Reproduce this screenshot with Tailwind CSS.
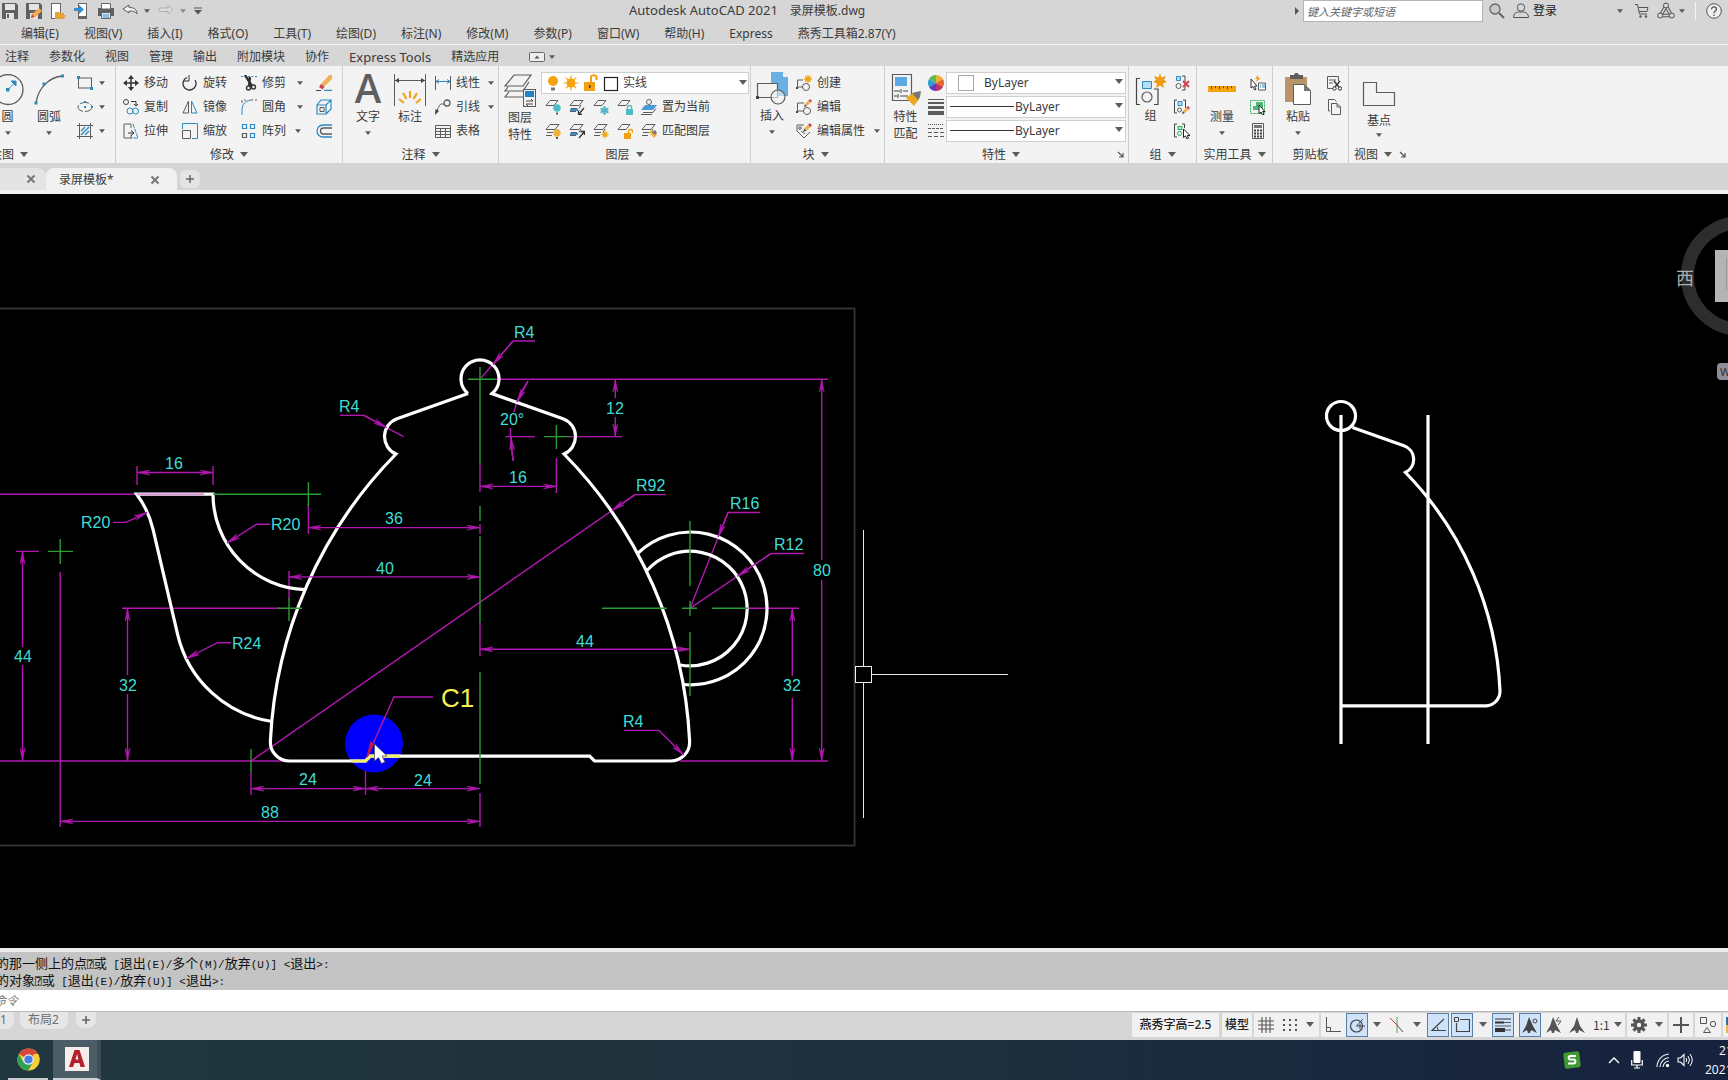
<!DOCTYPE html>
<html lang="zh-CN">
<head>
<meta charset="utf-8">
<title>Autodesk AutoCAD 2021 录屏模板.dwg</title>
<script src="https://cdn.jsdelivr.net/npm/@tailwindcss/browser@4"></script>
</head>
<body class="h-screen overflow-hidden flex flex-col bg-[#d6d6d6] text-[#3b3b3b] text-xs leading-4 whitespace-nowrap font-['Noto_Sans','Noto_Sans_CJK_SC',sans-serif]">

<svg width="0" height="0" class="absolute" aria-hidden="true">
  <defs>
    <symbol id="caret" viewBox="0 0 8 5"><path d="M0 0h8L4 5z" fill="#5c5c5c"/></symbol>
    <symbol id="close" viewBox="0 0 10 10"><path d="M1.5 1.5l7 7M8.5 1.5l-7 7" stroke="#777" stroke-width="2" fill="none"/></symbol>
    <symbol id="launch" viewBox="0 0 7 7"><path d="M1 1l5 5M6 2v4H2" stroke="#555" fill="none" stroke-width="1.2"/></symbol>
    <symbol id="sheets" viewBox="0 0 16 16"><g fill="none" stroke="#5c5c5c"><path d="M5 1.5h9l-4 5H1z"/><path d="M2 9.5h6M1 12.5h6M12 6l-2 3.5"/></g></symbol>
    <symbol id="sheet" viewBox="0 0 16 16"><path d="M5 1.5h8l-4 5H1z" fill="none" stroke="#5c5c5c"/></symbol>
    <symbol id="pencil" viewBox="0 0 9 9"><path d="M1 8l1-3 2 2z" fill="#444"/><path d="M2 5l3.500-3.500 2 2L4 7z" fill="#f2b04c"/><path d="M5.500 1.500L7 0l2 2-1.500 1.500z" fill="#c9424c"/></symbol>
  </defs>
</svg>

<!-- title bar -->
<header class="flex flex-col shrink-0">
  <div class="h-[22px] flex items-center justify-between">
    <div class="flex items-center gap-2 pl-0.5 w-[629px]">
      <button aria-label="保存"><svg class="size-4 block" viewBox="0 0 16 16"><path d="M0 0h14l2 2v14H0z" fill="#606060"/><path d="M3 1h10v6H3zM4 10h8v6H4z" fill="#e4e4e4"/><path d="M5 11h2v4H5z" fill="#606060"/></svg></button>
      <button aria-label="另存为"><svg class="size-4 block" viewBox="0 0 16 16"><path d="M0 0h14l2 2v14H0z" fill="#606060"/><path d="M3 1h10v6H3zM4 10h8v6H4z" fill="#e4e4e4"/><path d="M5 15l1-4 7-6 3 3-7 6z" fill="#f3a94e"/><path d="M5 15l1-4 2.500 3z" fill="#c44"/></svg></button>
      <button aria-label="从移动设备打开"><svg class="size-4 block" viewBox="0 0 16 16"><rect x="1.500" y=".5" width="9" height="15" fill="#fff" stroke="#666"/><path d="M5 9h4l1 1h4v2h2l-2 4H5z" fill="#e5a33a"/></svg></button>
      <button aria-label="保存到移动设备"><svg class="size-4 block" viewBox="0 0 16 16"><rect x="4.500" y=".5" width="8" height="15" fill="#fff" stroke="#666"/><path d="M4 13h9v3H4z" fill="#666"/><path d="M0 5h5V2l5 4.500-5 4.500V8H0z" fill="#2f8fd0"/></svg></button>
      <button aria-label="打印"><svg class="size-4 block" viewBox="0 0 16 16"><path d="M0 5h16v8H0z" fill="#606060"/><path d="M3.500.5h9V6h-9z" fill="#fff" stroke="#666"/><path d="M3.500 9.500h9v6h-9z" fill="#cfe3f3" stroke="#666"/><path d="M5 12h6M5 14h6" stroke="#4a9ad0"/></svg></button>
      <button aria-label="放弃" class="flex items-center gap-1.5"><svg class="w-4 h-4 block" viewBox="0 0 16 16"><path d="M1 6l6-4v2.500c5 0 8 2 8 6.500-2-2.500-4-3-8-3V10z" fill="#f4f4f4" stroke="#555"/></svg><svg class="w-1.5 h-1"><use href="#caret"/></svg></button>
      <button aria-label="重做" class="flex items-center gap-1.5"><svg class="w-4 h-4 block" viewBox="0 0 16 16"><path d="M15 6.500l-5-4v2.500H1v3.500h9V11z" fill="#dcdcdc" stroke="#b0b0b0"/></svg><svg class="w-1.5 h-1 opacity-60"><use href="#caret"/></svg></button>
      <button aria-label="自定义快速访问工具栏"><svg class="w-2 h-2 block" viewBox="0 0 8 8"><path d="M0 1h8" stroke="#555"/><path d="M0 3h8L4 7.500z" fill="#555"/></svg></button>
    </div>
    <h1 class="text-xs font-normal flex items-center gap-3"><span class="text-[13px]">Autodesk AutoCAD 2021</span><span>录屏模板.dwg</span></h1>
    <div class="flex-1"></div>
    <div class="flex items-center w-[434px] h-full">
      <svg class="w-1.5 h-2 shrink-0" viewBox="0 0 6 8"><path d="M1 0v8l4-4z" fill="#555"/></svg>
      <input aria-label="搜索" placeholder="键入关键字或短语" class="ml-[3px] w-[180px] shrink-0 h-[22px] bg-white border border-[#b5b5b5] px-[3px] text-[11px] italic text-[#555] placeholder:text-[#666]">
      <button aria-label="搜索" class="ml-1.5 shrink-0"><svg class="size-4 block" viewBox="0 0 16 16"><circle cx="6" cy="6" r="5" fill="#c9c9c9" stroke="#666" stroke-width="1.300"/><path d="M10 10l5 5" stroke="#666" stroke-width="2"/></svg></button>
      <button class="ml-2 shrink-0 flex items-center gap-1 text-[#222]"><svg class="size-4 block" viewBox="0 0 16 16"><circle cx="8" cy="4.500" r="3.700" fill="none" stroke="#555"/><path d="M.5 14.500c0-4 3-5.500 5-5.500h5c2 0 5 1.500 5 5.500z" fill="none" stroke="#555"/></svg>登录</button>
      <svg class="ml-[60px] w-1.5 h-1 shrink-0"><use href="#caret"/></svg>
      <button aria-label="购物车" class="ml-3 shrink-0"><svg class="w-3.5 h-4 block" viewBox="0 0 14 16"><path d="M0 1.500h2.500l2 9.500H12M3.500 4.500H13l-1 4H4" fill="none" stroke="#555"/><circle cx="5.500" cy="13.500" r="1.200" fill="#555"/><circle cx="11" cy="13.500" r="1.200" fill="#555"/></svg></button>
      <button aria-label="Autodesk App Store" class="ml-2 shrink-0 flex items-center gap-1"><svg class="size-[18px] block" viewBox="0 0 18 18"><g fill="none" stroke="#555"><path d="M9 4L3.500 13.500h11z" stroke-width="3.500"/><path d="M9 4L3.500 13.500h11z" stroke="#d6d6d6" stroke-width="1.500"/><circle cx="9" cy="3.500" r="2.500" fill="#d6d6d6"/><circle cx="3.200" cy="13.500" r="2.500" fill="#d6d6d6"/><circle cx="14.800" cy="13.500" r="2.500" fill="#d6d6d6"/></g></svg><svg class="w-1.5 h-1"><use href="#caret"/></svg></button>
      <span class="ml-2.5 w-px h-[18px] shrink-0 bg-[#f4f4f4]"></span>
      <button aria-label="帮助" class="ml-2.5 shrink-0 flex items-center gap-2"><svg class="size-4 block" viewBox="0 0 16 16"><circle cx="8" cy="8" r="7.300" fill="#eee" stroke="#555"/><path d="M5.500 6.200c0-3.200 5-3.200 5 0 0 1.800-2.500 1.800-2.500 4M8 11.500v1.500" fill="none" stroke="#555" stroke-width="1.300"/></svg><svg class="w-1.5 h-1 shrink-0"><use href="#caret"/></svg></button>
    </div>
  </div>
  <nav aria-label="菜单栏" class="h-[23px] flex items-center gap-[25px] pl-[21px] pt-0.5 border-b border-[#f2f2f2]">
    <a href="#">编辑(E)</a><a href="#">视图(V)</a><a href="#">插入(I)</a><a href="#">格式(O)</a><a href="#">工具(T)</a><a href="#">绘图(D)</a><a href="#">标注(N)</a><a href="#">修改(M)</a><a href="#">参数(P)</a><a href="#">窗口(W)</a><a href="#">帮助(H)</a><a href="#">Express</a><a href="#">燕秀工具箱2.87(Y)</a>
  </nav>
  <nav aria-label="功能区选项卡" class="h-[21px] flex items-center gap-5 pl-[5px] pt-0.5">
    <a href="#">注释</a><a href="#">参数化</a><a href="#">视图</a><a href="#">管理</a><a href="#">输出</a><a href="#">附加模块</a><a href="#">协作</a><a href="#" class="text-[13px]">Express Tools</a><a href="#">精选应用</a>
    <button aria-label="最小化" class="ml-2.5 flex items-center gap-1"><svg class="w-4 h-2.5" viewBox="0 0 16 10"><rect x=".5" y=".5" width="15" height="9" rx="1" fill="#eee" stroke="#666"/><path d="M5.500 6.500h5L8 3.500z" fill="#555"/></svg><svg class="w-1.5 h-1"><use href="#caret"/></svg></button>
  </nav>
</header>

<!-- ribbon -->
<section aria-label="功能区" class="h-[97px] shrink-0 flex bg-[#f3f3f3] overflow-hidden">
  <!-- draw -->
  <div class="w-[116px] shrink-0 border-r border-[#cfcfcf] flex flex-col pt-[5px]">
    <div class="flex h-[72px]">
      <button class="w-[31px] flex flex-col items-center pr-4 pt-[3px]"><svg class="w-[34px] h-[34px] shrink-0" viewBox="0 0 34 34"><circle cx="17" cy="15.500" r="15" fill="none" stroke="#5c5c5c" stroke-width="1.300"/><path d="M17 15.500l8-8M25 12V7h-5z" stroke="#2b8bc0" fill="#2b8bc0"/><rect x="15" y="14" width="3.500" height="3.500" fill="#2b8bc0"/></svg><span class="pt-px">圆</span><svg class="w-1.5 h-1 mt-1.5 shrink-0"><use href="#caret"/></svg></button>
      <button class="w-[36px] flex flex-col items-center pt-[3px]"><svg class="w-[34px] h-[34px] shrink-0" viewBox="0 0 34 34"><path d="M4 29C6 15 16 3 31 2" fill="none" stroke="#5c5c5c" stroke-width="1.300"/><path d="M2.500 27.500h3v3h-3zM10.500 8.500h3v3h-3zM29 .5h3v3h-3z" fill="#2b8bc0"/></svg><span class="pt-px">圆弧</span><svg class="w-1.5 h-1 mt-1.5 shrink-0"><use href="#caret"/></svg></button>
      <div class="ml-2.5 flex flex-col">
        <button aria-label="矩形" class="h-6 flex items-center gap-1.5"><svg class="size-4" viewBox="0 0 16 16"><rect x="1.500" y="3" width="13" height="10" fill="none" stroke="#5c5c5c"/><path d="M0 1h3v3H0zM13 12h3v3h-3z" fill="#2b8bc0"/></svg><svg class="w-1.5 h-1"><use href="#caret"/></svg></button>
        <button aria-label="椭圆" class="h-6 flex items-center gap-1.5"><svg class="size-4" viewBox="0 0 16 16"><ellipse cx="8" cy="8" rx="7" ry="4.500" fill="none" stroke="#5c5c5c" stroke-dasharray="9 2"/><path d="M7 7h2v2H7zM14 7h2v2h-2zM7 2h2v2H7z" fill="#2b8bc0"/></svg><svg class="w-1.5 h-1"><use href="#caret"/></svg></button>
        <button aria-label="图案填充" class="h-6 flex items-center gap-1.5"><svg class="size-4" viewBox="0 0 16 16"><path d="M0 2.500h16M0 13.500h16M2.500 0v16M13.500 0v16" stroke="#5c5c5c"/><path d="M4 8l4-4M4 12l8-8M8 12l4-4" stroke="#2b8bc0" stroke-width="1.400"/></svg><svg class="w-1.5 h-1"><use href="#caret"/></svg></button>
      </div>
    </div>
    <button class="flex items-center gap-1.5 -ml-2.5 h-5 pt-[3px]">绘图<svg class="w-2 h-[5px]"><use href="#caret"/></svg></button>
  </div>

  <!-- modify -->
  <div class="w-[227px] shrink-0 border-r border-[#cfcfcf] flex flex-col pt-[5px]">
    <div class="grid grid-cols-[59px_59px_75px_16px] grid-rows-[24px_24px_24px] pl-[7px]">
      <button class="flex items-center gap-[5px]"><svg class="size-4" viewBox="0 0 16 16"><path d="M8 1v14M1 8h14" stroke="#333" stroke-width="1.500"/><path d="M8 0l3 4H5zM8 16l3-4H5zM0 8l4-3v6zM16 8l-4-3v6z" fill="#333"/></svg>移动</button>
      <button class="flex items-center gap-[5px]"><svg class="size-4" viewBox="0 0 16 16"><path d="M5 2.500A6.500 6.500 0 1 0 13 5" fill="none" stroke="#333" stroke-width="1.300"/><path d="M7 0v6H2" fill="none" stroke="#333"/></svg>旋转</button>
      <button class="flex items-center gap-[5px]"><svg class="size-4" viewBox="0 0 16 16"><path d="M0 1.500h16" stroke="#2b8bc0" stroke-dasharray="2 1.500"/><path d="M4 0l7 11M9 2L8 11" stroke="#333" stroke-width="2.400"/><circle cx="7.500" cy="13" r="2" fill="none" stroke="#333" stroke-width="1.400"/><circle cx="12.500" cy="12" r="2" fill="none" stroke="#333" stroke-width="1.400"/></svg>修剪<svg class="w-1.5 h-1 ml-1.5"><use href="#caret"/></svg></button>
      <button aria-label="删除" class="flex items-center"><svg class="size-4" viewBox="0 0 16 16"><path d="M5 9l8-9h3v4l-8 8z" fill="#f3b25a"/><path d="M5 9l3.500 3-2 2.500-3.500-2.500z" fill="#c9424c"/><path d="M0 15.500h5" stroke="#444"/><path d="M8 15.500h8" stroke="#2b8bc0" stroke-width="1.500"/></svg></button>
      <button class="flex items-center gap-[5px]"><svg class="size-4" viewBox="0 0 16 16"><circle cx="3" cy="3" r="2.500" fill="none" stroke="#444"/><path d="M8 2.500h5V7M11 5l2 2 2-2" fill="none" stroke="#333"/><circle cx="7" cy="12" r="3" fill="none" stroke="#2b8bc0"/><circle cx="12.500" cy="12" r="3" fill="none" stroke="#2b8bc0"/></svg>复制</button>
      <button class="flex items-center gap-[5px]"><svg class="size-4" viewBox="0 0 16 16"><path d="M6.500 2v12H1z" fill="none" stroke="#5c5c5c"/><path d="M9.500 2v12H15z" fill="none" stroke="#2b8bc0"/></svg>镜像</button>
      <button class="flex items-center gap-[5px]"><svg class="size-4" viewBox="0 0 16 16"><path d="M1 16v-5C1 5 5 1.500 9 1.500" fill="none" stroke="#2b8bc0"/><path d="M1 4V1h4M9 1h7" fill="none" stroke="#5c5c5c" stroke-dasharray="3 2"/></svg>圆角<svg class="w-1.5 h-1 ml-1.5"><use href="#caret"/></svg></button>
      <button aria-label="分解" class="flex items-center"><svg class="size-4" viewBox="0 0 16 16"><path d="M1 6h9v9H1zM1 6l4-5h10l-5 5M15 1v9l-5 5" fill="none" stroke="#2b8bc0" stroke-width="1.200"/><path d="M4 8.500h4v4H4z" fill="none" stroke="#555"/></svg></button>
      <button class="flex items-center gap-[5px]"><svg class="size-4" viewBox="0 0 16 16"><path d="M1 15V1h7v4M1 15h7v-3" fill="none" stroke="#5c5c5c"/><path d="M10 1l5 14H8" fill="none" stroke="#2b8bc0" stroke-dasharray="4 1"/><path d="M5 10h5M8 7.500l3 2.500-3 2.500" stroke="#333" fill="none"/></svg>拉伸</button>
      <button class="flex items-center gap-[5px]"><svg class="size-4" viewBox="0 0 16 16"><path d="M.5 6V.5h15v15H10" fill="none" stroke="#2b8bc0"/><path d="M.5 7.500h8v8h-8z" fill="none" stroke="#5c5c5c"/></svg>缩放</button>
      <button class="flex items-center gap-[5px]"><svg class="size-4" viewBox="0 0 16 16"><g fill="none" stroke-width="1.200"><path d="M1.500 1.500h4v4h-4zM9.500 1.500h4v4h-4z" stroke="#2b8bc0"/><path d="M9.500 10.500h4v4h-4z" stroke="#2b8bc0"/><path d="M1.500 10.500h4v4h-4z" stroke="#5c5c5c"/></g></svg>阵列<svg class="w-1.5 h-1 ml-1"><use href="#caret"/></svg></button>
      <button aria-label="偏移" class="flex items-center"><svg class="size-4" viewBox="0 0 16 16"><path d="M16 2H7a6 6 0 0 0 0 12h9" fill="none" stroke="#2b8bc0" stroke-width="1.300"/><path d="M16 5H7.500a3 3 0 0 0 0 6H16" fill="none" stroke="#5c5c5c" stroke-width="1.300"/></svg></button>
    </div>
    <button class="flex items-center justify-center gap-1.5 h-5 pt-[3px]">修改<svg class="w-2 h-[5px]"><use href="#caret"/></svg></button>
  </div>

  <!-- annotation -->
  <div class="w-[156px] shrink-0 border-r border-[#cfcfcf] flex flex-col pt-[5px]">
    <div class="flex h-[72px]">
      <button class="w-[50px] flex flex-col items-center pt-[3px]"><svg class="w-[34px] h-[34px] shrink-0" viewBox="0 0 34 34"><text x="17" y="29" text-anchor="middle" font-family="Open Sans" font-weight="600" font-size="40" fill="#5f5f5f">A</text></svg><span class="pt-px">文字</span><svg class="w-1.5 h-1 mt-1.5 shrink-0"><use href="#caret"/></svg></button>
      <button class="w-[34px] flex flex-col items-center pt-[3px]"><svg class="w-[34px] h-[34px] shrink-0" viewBox="0 0 34 34"><path d="M1.500 0v32M32.500 0v32M2 6.500h30" stroke="#5c5c5c"/><path d="M2 6.500l4-2.500v5zM32 6.500L28 4v5z" fill="#444"/><path d="M17 17v7M10 19l3.500 6M24 19l-3.500 6M6 25l5 4M28 25l-5 4" stroke="#eea41c" stroke-width="2.200"/></svg><span class="pt-px">标注</span></button>
      <div class="ml-2 flex flex-col">
        <button class="h-6 flex items-center gap-[5px]"><svg class="size-4" viewBox="0 0 16 16"><path d="M.5 1v14M15.500 1v14" stroke="#5c5c5c"/><path d="M1 6.500h14M4 4.500l-3 2 3 2M12 4.500l3 2-3 2" stroke="#2b8bc0" fill="none"/></svg>线性<svg class="w-1.5 h-1 ml-[3px]"><use href="#caret"/></svg></button>
        <button class="h-6 flex items-center gap-[5px]"><svg class="size-4" viewBox="0 0 16 16"><circle cx="12" cy="4" r="3" fill="none" stroke="#5c5c5c" stroke-width="1.300"/><path d="M9 5H6C4 6 3 10 1 14" fill="none" stroke="#5c5c5c"/><path d="M0 16l.5-6L4 12z" fill="#444"/></svg>引线<svg class="w-1.5 h-1 ml-[3px]"><use href="#caret"/></svg></button>
        <button class="h-6 flex items-center gap-[5px]"><svg class="size-4" viewBox="0 0 16 16"><path d="M.5 2.500h15v12H.5zM.5 5.500h15M.5 8.500h15M.5 11.500h15M5.500 5v9M10.500 5v9" fill="none" stroke="#5c5c5c"/></svg>表格</button>
      </div>
    </div>
    <button class="flex items-center justify-center gap-1.5 h-5 pt-[3px]">注释<svg class="w-2 h-[5px]"><use href="#caret"/></svg></button>
  </div>

  <!-- layers -->
  <div class="w-[252px] shrink-0 border-r border-[#cfcfcf] flex flex-col pt-[5px]">
    <div class="flex h-[72px]">
      <button class="w-[42px] flex flex-col items-center pt-[3px]"><svg class="w-8 h-[34px] shrink-0" viewBox="0 0 32 34"><g fill="none" stroke="#5c5c5c" stroke-width="1.200"><path d="M10 1h17l-8 11H1z"/><path d="M25 8l-6 9H1l3-4M19 23H1l4-5"/></g><rect x="19.500" y="15.500" width="12" height="17" fill="#f3f3f3" stroke="#5c5c5c"/><path d="M21 17h9v6h-9z" fill="#2280c4"/><path d="M22 27h7l-2-2M29 30h-7l2 2" fill="none" stroke="#444"/></svg><span class="pt-px leading-[17px]">图层<br>特性</span></button>
      <div class="flex flex-col w-[208px]">
        <div class="relative h-[22px] my-px flex items-center">
          <select aria-label="图层" class="appearance-none w-full h-full bg-white border border-[#cfcfcf] pl-[81px] outline-none"><option>实线</option></select>
          <svg class="absolute left-1.5 top-0.5 w-[72px] h-[18px] pointer-events-none" viewBox="0 0 72 18"><circle cx="6" cy="7" r="5" fill="#f5a30e"/><path d="M4 13.500h4v3H4z" fill="#777"/><circle cx="24" cy="9" r="4.500" fill="#f5a30e"/><path d="M24 1.500v15M16.500 9h15M18.700 3.700l10.600 10.600M29.300 3.700L18.700 14.300" stroke="#f5a30e" stroke-width="1.200"/><path d="M37 8h11v9H37z" fill="#f0a010"/><path d="M44 8V3.500c0-3 5.500-3 5.500 0V6" fill="none" stroke="#f0a010" stroke-width="2"/><path d="M42 11h1.500v3H42z" fill="#444"/><rect x="57.500" y="3.500" width="13" height="13" fill="#fff" stroke="#222" stroke-width="1.200"/></svg>
          <svg class="absolute right-0.5 top-2 w-2 h-[5px] pointer-events-none"><use href="#caret"/></svg>
        </div>
        <div class="h-6 flex items-center gap-2 pl-1">
          <button aria-label="关"><svg class="size-4 block" viewBox="0 0 16 16"><use href="#sheet"/><circle cx="12" cy="9" r="3.700" fill="#4cbdc4"/><path d="M11 13.500h2v2h-2z" fill="#555"/></svg></button>
          <button aria-label="隔离"><svg class="size-4 block" viewBox="0 0 16 16"><use href="#sheets"/><path d="M1 11h8" stroke="#3b8ec8" stroke-width="2"/><path d="M15 9l-5 6M9.500 11.500V15.500H13" stroke="#333" fill="none" stroke-width="1.300"/></svg></button>
          <button aria-label="冻结"><svg class="size-4 block" viewBox="0 0 16 16"><use href="#sheet"/><path d="M11.500 7v9M7.500 9.500l8 4M15.500 9.500l-8 4" stroke="#4cb3c4" stroke-width="1.500"/><circle cx="11.500" cy="11.500" r="3" fill="none" stroke="#4cb3c4"/></svg></button>
          <button aria-label="锁定"><svg class="size-4 block" viewBox="0 0 16 16"><use href="#sheet"/><path d="M9 10h7v6H9z" fill="#4cbdc4"/><path d="M10.500 10V8c0-2 4-2 4 0v2" fill="none" stroke="#4cbdc4" stroke-width="1.300"/></svg></button>
          <button class="flex items-center gap-[5px]"><svg class="size-4" viewBox="0 0 16 16"><path d="M4 6h12l-4 5H0z" fill="#4a9ad6"/><circle cx="8" cy="3" r="2.500" fill="#f3f3f3" stroke="#666"/><path d="M2 13.500h10l3-4M0 15.500h11" fill="none" stroke="#5c5c5c"/></svg>置为当前</button>
        </div>
        <div class="h-6 flex items-center gap-2 pl-1">
          <button aria-label="打开所有图层"><svg class="size-4 block" viewBox="0 0 16 16"><use href="#sheets"/><circle cx="12" cy="10" r="3.700" fill="#f0b23c"/><path d="M11 14h2v2h-2z" fill="#555"/></svg></button>
          <button aria-label="取消隔离"><svg class="size-4 block" viewBox="0 0 16 16"><use href="#sheets"/><path d="M1 11h8" stroke="#3b8ec8" stroke-width="2"/><path d="M10 15l5-6M11.500 8.500H15.500V12" stroke="#333" fill="none" stroke-width="1.300"/></svg></button>
          <button aria-label="解冻所有图层"><svg class="size-4 block" viewBox="0 0 16 16"><use href="#sheets"/><circle cx="12" cy="11.500" r="2.500" fill="#f0a818"/><path d="M12 7v9M7.500 11.500h9M9 8.500l6 6M15 8.500l-6 6" stroke="#f0a818" stroke-width=".8"/></svg></button>
          <button aria-label="解锁"><svg class="size-4 block" viewBox="0 0 16 16"><use href="#sheet"/><path d="M7 10h7v6H7z" fill="#f0a010"/><path d="M11.500 10V8c0-2 4-2 4 0v2" fill="none" stroke="#f0a010" stroke-width="1.300"/></svg></button>
          <button class="flex items-center gap-[5px]"><svg class="size-4" viewBox="0 0 16 16"><use href="#sheets"/><path d="M8 9l3-2 5 5-3 3z" fill="#f0b23c"/><path d="M11 9l3-2 2 3-2 2z" fill="#777"/></svg>匹配图层</button>
        </div>
      </div>
    </div>
    <button class="flex items-center justify-center gap-1.5 h-5 pt-[3px]">图层<svg class="w-2 h-[5px]"><use href="#caret"/></svg></button>
  </div>

  <!-- block -->
  <div class="w-[134px] shrink-0 border-r border-[#cfcfcf] flex flex-col pt-[5px]">
    <div class="flex h-[72px]">
      <button class="w-[42px] flex flex-col items-center pt-px"><svg class="w-8 h-[34px] shrink-0" viewBox="0 0 32 34"><path d="M15 0h12l5 5v19H15z" fill="#68b0e2"/><path d="M27 0v5h5" fill="#f3f3f3"/><path d="M1.500 11.500h20v14h-20z" fill="#f3f3f3" stroke="#5c5c5c" stroke-width="1.200"/><circle cx="22" cy="25" r="7" fill="#f3f3f3" fill-opacity=".6" stroke="#5c5c5c" stroke-width="1.200"/><path d="M0 24h3v3H0z" fill="#444"/></svg><span class="pt-0.5">插入</span><svg class="w-1.5 h-1 mt-1.5 shrink-0"><use href="#caret"/></svg></button>
      <div class="ml-[3px] flex flex-col">
        <button class="h-6 flex items-center gap-[5px]"><svg class="size-4" viewBox="0 0 16 16"><path d="M7 5H1.500v7H7" fill="none" stroke="#5c5c5c"/><circle cx="10" cy="12" r="3.500" fill="none" stroke="#5c5c5c"/><path d="M0 12h2v2H0z" fill="#444"/><path d="M12 0v8M8 4h8M9.200 1.200l5.600 5.600M14.800 1.200L9.200 6.800" stroke="#eea41c" stroke-width="1.400"/></svg>创建</button>
        <button class="h-6 flex items-center gap-[5px]"><svg class="size-4" viewBox="0 0 16 16"><path d="M8 4H1.500v8H7" fill="none" stroke="#5c5c5c"/><circle cx="11" cy="12" r="3.500" fill="none" stroke="#5c5c5c"/><path d="M0 12h2v2H0z" fill="#444"/><use href="#pencil" x="7" y="0" width="9" height="9"/></svg>编辑</button>
        <button class="h-6 flex items-center gap-[5px]"><svg class="size-4" viewBox="0 0 16 16"><path d="M8 2H1v6l7 7 6-6" fill="none" stroke="#5c5c5c"/><circle cx="4" cy="5" r="1.300" fill="none" stroke="#5c5c5c"/><path d="M5 8l4 3" stroke="#5c5c5c"/><use href="#pencil" x="6" y="0" width="10" height="10"/></svg>编辑属性<svg class="w-1.5 h-1 ml-1"><use href="#caret"/></svg></button>
      </div>
    </div>
    <button class="flex items-center justify-center gap-1.5 h-5 pt-[3px] pr-1">块<svg class="w-2 h-[5px]"><use href="#caret"/></svg></button>
  </div>

  <!-- properties -->
  <div class="w-[244px] shrink-0 border-r border-[#cfcfcf] flex flex-col pt-[5px]">
    <div class="flex h-[72px]">
      <button class="w-[41px] flex flex-col items-center pt-0.5"><svg class="w-8 h-[34px] shrink-0" viewBox="0 0 32 34"><path d="M2.500 1.500h19v26h-19z" fill="#f3f3f3" stroke="#5c5c5c" stroke-width="1.200"/><path d="M5 4h12v9H5z" fill="#5aa9e0"/><path d="M4 18h6M13 18h5M11 16v4M4 23h3M10 23h8M8 21v4" stroke="#444"/><path d="M16 25l7-5 6 6-5 7z" fill="#eea820"/><path d="M22 20l4-1 5-1-1 6-2 3z" fill="#777"/></svg><span class="pt-px leading-[17px]">特性<br>匹配</span></button>
      <div class="flex flex-col items-center w-5">
        <div class="h-6 flex items-center"><svg class="size-4" viewBox="-8 -8 16 16"><path d="M0 0V-8A8 8 0 0 1 6.900-4z" fill="#e8b52c"/><path d="M0 0L6.900-4A8 8 0 0 1 6.900 4z" fill="#e6682e"/><path d="M0 0L6.900 4A8 8 0 0 1 0 8z" fill="#c0306a"/><path d="M0 0V8A8 8 0 0 1-6.900 4z" fill="#5440c4"/><path d="M0 0L-6.900 4A8 8 0 0 1-6.900-4z" fill="#2c9fd0"/><path d="M0 0L-6.900-4A8 8 0 0 1 0-8z" fill="#5bb85a"/></svg></div>
        <div class="h-6 flex items-center"><svg class="size-4" viewBox="0 0 16 16"><path d="M0 .5h16" stroke="#5c5c5c"/><path d="M0 4h16" stroke="#5c5c5c" stroke-width="2"/><path d="M0 8.500h16" stroke="#5c5c5c" stroke-width="3"/><path d="M0 14h16" stroke="#5c5c5c" stroke-width="4"/></svg></div>
        <div class="h-6 flex items-center"><svg class="size-4" viewBox="0 0 16 16"><path d="M0 1.500h16" stroke="#5c5c5c" stroke-dasharray="1 1"/><path d="M0 5.500h16" stroke="#5c5c5c" stroke-dasharray="3 1"/><path d="M0 9.500h16M0 13.500h16" stroke="#5c5c5c" stroke-dasharray="4 2"/></svg></div>
      </div>
      <div class="flex flex-col w-[180px]">
        <div class="relative h-6 flex items-center"><select aria-label="颜色" class="appearance-none w-full h-[22px] bg-white border border-[#cfcfcf] pl-[37px] outline-none"><option>ByLayer</option></select><span class="absolute left-3 top-1 size-4 border border-[#aaa] bg-white pointer-events-none"></span><svg class="absolute right-[3px] top-2 w-2 h-[5px] pointer-events-none"><use href="#caret"/></svg></div>
        <div class="relative h-6 flex items-center"><select aria-label="线宽" class="appearance-none w-full h-[22px] bg-white border border-[#cfcfcf] pl-[68px] outline-none"><option>ByLayer</option></select><span class="absolute left-1 top-[11px] w-16 h-px bg-[#333] pointer-events-none"></span><svg class="absolute right-[3px] top-2 w-2 h-[5px] pointer-events-none"><use href="#caret"/></svg></div>
        <div class="relative h-6 flex items-center"><select aria-label="线型" class="appearance-none w-full h-[22px] bg-white border border-[#cfcfcf] pl-[68px] outline-none"><option>ByLayer</option></select><span class="absolute left-1 top-[11px] w-16 h-px bg-[#333] pointer-events-none"></span><svg class="absolute right-[3px] top-2 w-2 h-[5px] pointer-events-none"><use href="#caret"/></svg></div>
      </div>
    </div>
    <div class="flex items-center h-5 pt-[3px] pl-[97px] pr-1 justify-between"><button class="flex items-center gap-1.5">特性<svg class="w-2 h-[5px]"><use href="#caret"/></svg></button><button aria-label="特性对话框"><svg class="size-[7px]"><use href="#launch"/></svg></button></div>
  </div>

  <!-- group -->
  <div class="w-[68px] shrink-0 border-r border-[#cfcfcf] flex flex-col pt-[5px]">
    <div class="flex h-[72px]">
      <button class="w-[43px] flex flex-col items-center pt-0.5"><svg class="w-8 h-[34px] shrink-0" viewBox="0 0 32 34"><path d="M5 5.500H1.500v26H5M19 16h4v15.500h-4" fill="none" stroke="#444" stroke-width="1.200"/><path d="M7.500 8.500h9v7h-9z" fill="#b8dcf4" stroke="#2b8bc0"/><circle cx="12" cy="24" r="5" fill="none" stroke="#5c5c5c" stroke-width="1.200"/><path d="M25 0l1.500 4.500L31 3l-2 4 3 2-4 1.500 1 4.500-4-2.500-4 2.500 1-4.500L18 9l3-2-2-4 4.500 1.500z" fill="#f09c14"/></svg><span class="pt-px">组</span></button>
      <div class="ml-0.5 flex flex-col">
        <button aria-label="解除编组" class="h-6"><svg class="size-4" viewBox="0 0 16 16"><path d="M2.500 1.500h4v4h-4z" fill="#b8dcf4" stroke="#2b8bc0"/><circle cx="4.500" cy="11" r="2.500" fill="none" stroke="#5c5c5c"/><path d="M8 1h3v14H8" fill="none" stroke="#444"/><path d="M9 6l6 6M15 6l-6 6" stroke="#cf4452" stroke-width="2"/></svg></button>
        <button aria-label="组编辑" class="h-6"><svg class="size-4" viewBox="0 0 16 16"><path d="M3 1H.5v13H3M9 1h2.500v8" fill="none" stroke="#444"/><path d="M4 2.500h4v4H4z" fill="#b8dcf4" stroke="#2b8bc0"/><circle cx="5.500" cy="11" r="2" fill="none" stroke="#5c5c5c"/><use href="#pencil" x="7" y="7" width="9" height="9"/></svg></button>
        <button aria-label="启用组选择" class="h-6"><svg class="size-4" viewBox="0 0 16 16"><path d="M3 1H.5v13H3M8 1h2.500v4" fill="none" stroke="#444"/><path d="M4 3.500h4v3H4z" fill="#c8ecd0" stroke="#2ca858"/><circle cx="5.500" cy="10.500" r="2" fill="none" stroke="#2ca858"/><path d="M9.500 6v8.500l2-1.500 1.500 3 1.500-.8-1.300-2.700H16z" fill="#fff" stroke="#222"/></svg></button>
      </div>
    </div>
    <button class="flex items-center justify-center gap-1.5 h-5 pt-[3px]">组<svg class="w-2 h-[5px]"><use href="#caret"/></svg></button>
  </div>

  <!-- utilities -->
  <div class="w-[76px] shrink-0 border-r border-[#cfcfcf] flex flex-col pt-[5px]">
    <div class="flex h-[72px]">
      <button class="w-[50px] flex flex-col items-center pt-0.5"><svg class="w-8 h-[34px] shrink-0" viewBox="0 0 32 34"><path d="M2 13h28v6H2z" fill="#f3a30c"/><path d="M5.500 13v3M9.500 13v2M13.500 13v3M17.500 13v2M21.500 13v3M25.500 13v2" stroke="#6a4a10"/></svg><span class="pt-0.5">测量</span><svg class="w-1.5 h-1 mt-1.5 shrink-0"><use href="#caret"/></svg></button>
      <div class="ml-[3px] flex flex-col">
        <button aria-label="快速选择" class="h-6"><svg class="size-4" viewBox="0 0 16 16"><path d="M1 4v9l2-1.500L4.500 15l1.500-.8L4.500 11H7z" fill="#fff" stroke="#333"/><path d="M8.500 8h7v7h-7z" fill="#fff" stroke="#5c5c5c"/><path d="M10 10h1M12 10h3M10 12h1M12 12h3" stroke="#2b8bc0"/><path d="M8 0L5 4h2L6 7l5-4H8.500z" fill="#f0a010"/></svg></button>
        <button aria-label="全部选择" class="h-6"><svg class="size-4" viewBox="0 0 16 16"><path d="M.5 1.500h14v13H.5z" fill="none" stroke="#2ca858" stroke-dasharray="2 1"/><path d="M3 7h3V3h7v8H3z" fill="#4db874"/><path d="M9 6v8.500l2-1.500 1.500 3 1.500-.8-1.300-2.700H15z" fill="#fff" stroke="#222"/></svg></button>
        <button aria-label="快速计算器" class="h-6"><svg class="size-4" viewBox="0 0 16 16"><path d="M2.500.5h11v15h-11z" fill="#f3f3f3" stroke="#5c5c5c"/><path d="M4 2h8v3H4z" fill="#777"/><path d="M4 7.500h8M4 10.500h8M4 13.500h8" stroke="#444" stroke-width="2" stroke-dasharray="2 1"/></svg></button>
      </div>
    </div>
    <button class="flex items-center justify-center gap-1.5 h-5 pt-[3px]">实用工具<svg class="w-2 h-[5px]"><use href="#caret"/></svg></button>
  </div>

  <!-- clipboard -->
  <div class="w-[76px] shrink-0 border-r border-[#cfcfcf] flex flex-col pt-[5px]">
    <div class="flex h-[72px]">
      <button class="w-[50px] flex flex-col items-center pt-0.5"><svg class="w-8 h-[34px] shrink-0" viewBox="0 0 32 34"><path d="M3 4h22v25H3z" fill="#b89468"/><path d="M8 2h4c1-3 4-3 5 0h4v4H8z" fill="#5c5c5c"/><path d="M11.500 11.500h11l6 6v14h-17z" fill="#fff" stroke="#5c5c5c"/><path d="M22 11v7h7z" fill="#777"/></svg><span class="pt-0.5">粘贴</span><svg class="w-1.5 h-1 mt-1.5 shrink-0"><use href="#caret"/></svg></button>
      <div class="ml-[3px] flex flex-col">
        <button aria-label="剪切" class="h-6"><svg class="size-4" viewBox="0 0 16 16"><path d="M7 13.500H1.500v-12h11V6M3 5h7M3 8h4" fill="none" stroke="#5c5c5c"/><path d="M8 6l5 6M14 6l-5 6" stroke="#333" stroke-width="1.300"/><circle cx="8.500" cy="13.500" r="1.700" fill="none" stroke="#333"/><circle cx="14" cy="13.500" r="1.700" fill="none" stroke="#333"/></svg></button>
        <button aria-label="复制剪裁" class="h-6"><svg class="size-4" viewBox="0 0 16 16"><path d="M4 12H2.500V.5h6l2 2" fill="none" stroke="#5c5c5c"/><path d="M5.500 4.500H11l3.500 3.500v7.500h-9zM11 4.500V8h3.500" fill="none" stroke="#5c5c5c"/></svg></button>
      </div>
    </div>
    <div class="text-center h-5 pt-[3px] leading-[17px]">剪贴板</div>
  </div>

  <!-- view -->
  <div class="flex-1 flex flex-col pt-[5px]">
    <div class="flex h-[72px]">
      <button class="w-[60px] flex flex-col items-center pt-[7px]"><svg class="w-[34px] h-[34px] shrink-0" viewBox="0 0 34 34"><path d="M1.500 4.500h13v10h18v13h-31z" fill="none" stroke="#5c5c5c" stroke-width="1.200"/></svg><span class="pt-px">基点</span><svg class="w-1.5 h-1 mt-1 shrink-0"><use href="#caret"/></svg></button>
    </div>
    <div class="flex items-center h-5 pt-[3px] pl-[5px] gap-[7px]"><button class="flex items-center gap-1.5">视图<svg class="w-2 h-[5px]"><use href="#caret"/></svg></button><button aria-label="视图对话框"><svg class="size-[7px] block"><use href="#launch"/></svg></button></div>
  </div>
</section>

<!-- file tabs -->
<div class="h-[31px] shrink-0 flex items-end border-b-4 border-[#efefef] bg-[#d5d5d5]">
  <div class="w-[46px] h-[22px] bg-[#e4e4e4] rounded-tr-lg flex items-center justify-end pr-2.5"><button aria-label="关闭"><svg class="size-2.5 block"><use href="#close"/></svg></button></div>
  <div class="w-[131px] h-[22px] bg-[#f1f1f1] rounded-t-lg flex items-center justify-between pl-[13px] pr-[17px] pt-0.5"><a href="#">录屏模板*</a><button aria-label="关闭"><svg class="size-2.5 block"><use href="#close"/></svg></button></div>
  <button aria-label="新图形" class="ml-[3px] w-5 h-[18px] mb-0.5 self-end bg-[#e4e4e4] rounded-md flex items-center justify-center"><svg class="size-2" viewBox="0 0 8 8"><path d="M4 0v8M0 4h8" stroke="#666" stroke-width="1.500"/></svg></button>
</div>

<!-- drawing area -->
<main class="flex-1 min-h-0 relative bg-black overflow-hidden">
  <svg class="absolute inset-0 w-full h-full" font-family="Liberation Sans, Arial, sans-serif" role="img" aria-label="茶壶图形">
    <defs>
      <marker id="arr" markerUnits="userSpaceOnUse" markerWidth="14" markerHeight="6" refX="13" refY="3" orient="auto-start-reverse"><path d="M13 3L0 .500 5 3 0 5.500z" fill="#b018b0" stroke="#b018b0" stroke-width=".6"/></marker>
      <path id="pot" d="M468 393.600A19 19 0 1 1 492 393.600L563 418.700A19 19 0 0 1 564 454A439 439 0 0 1 689.600 741A19 19 0 0 1 670.500 761H594.500L589.700 756.200H370.300L365.500 761H289.500A19 19 0 0 1 270.400 741A439 439 0 0 1 396 454A19 19 0 0 1 397 418.700L468 393.600" fill="none"/>
      <clipPath id="halo"><circle cx="374" cy="743.500" r="29"/></clipPath>
    </defs>
    <g transform="translate(0 -194)">
      <!-- reference frame -->
      <path d="M0 308.500H854.500V845.500H0" fill="none" stroke="#161616" stroke-width="3"/>
      <path d="M0 308.500H854.500V845.500H0" fill="none" stroke="#363636" stroke-width="1"/>

      <!-- extension lines and leaders -->
      <g fill="none" stroke="#b018b0" stroke-width="1.400">
        <path d="M480 464v28M480 524v10M480 623v33M480 793v34M495 379.300H828M505 436.600h30M568 436.600h54M556.400 458v35M748 608.300h51M680 761H828"/>
        <path d="M0 494.200H137M137 466v19M213 466v19M308.400 504v30M289 571v28M122 608.300H280M16 551.400h23M60.200 572V827M0 761H290M251 773v22M365.500 768v27"/>
        <path d="M535 341H513L481 378M666 494.600H635L251 761M760 512.500H728L690 608.300M804 553.500H771L690 608.300M340 415.400h24L403.500 436.600M528 381C522 390 516 402 514 412M511 436Q511 450 513.500 461M510.500 428v8"/>
      </g>

      <!-- teapot outline -->
      <circle cx="374" cy="743.500" r="29" fill="#0000fa"/>
      <use href="#pot" stroke="#fff" stroke-width="3.200"/>
      <use href="#pot" stroke="#f2ee6a" stroke-width="3.200" clip-path="url(#halo)"/>
      <g fill="none" stroke="#fff" stroke-width="3.200">
        <path d="M637.500 553.500A76.400 76.400 0 1 1 683.500 684.500"/>
        <path d="M647 570.500A57.300 57.300 0 1 1 680 665"/>
        <path d="M305 589.600A95.400 95.400 0 0 1 213 494.200H136.700A95.400 95.400 0 0 1 153.100 529.600L177.600 634.400A114.500 114.500 0 0 0 272 721.500"/>
      </g>

      <!-- centre lines -->
      <g stroke="#2c9c34" stroke-width="1.400">
        <path d="M480 367V464M480 506v15M480 536v87M480 672V784M468 379.300h27"/>
        <path d="M544 436.600h25M556.400 425v24M602 608.300h65M682 608.300h15M712 608.300h36M690 521v65M690 601v15M690 632v64"/>
        <path d="M213 494.200H321M308.400 482v24M278 608.300h24M289 598v23M48 551.400h25M60.200 539v25M251 749v24"/>
      </g>
      <path d="M137 494.200h67" stroke="#dc96dc" stroke-width="2"/>

      <!-- dimension lines -->
      <g fill="none" stroke="#b018b0" stroke-width="1.400">
        <g marker-end="url(#arr)">
          <path d="M821.700 560V379.300"/><path d="M821.700 580V761"/>
          <path d="M615.300 398V379.300"/><path d="M615.300 417V436.600"/>
          <path d="M792.300 676V608.300"/><path d="M792.300 698V761"/>
          <path d="M22.500 647V551.400"/><path d="M22.500 665V761"/>
          <path d="M127.500 675V608.300"/><path d="M127.500 694V761"/>
          <path d="M513 341L493 364.500"/><path d="M635 494.600L612 510.500"/><path d="M728 512.500L718.200 537"/><path d="M771 553.500L737.500 576.200"/>
          <path d="M624 730.400h35L683.500 755"/><path d="M364 415.400L386.500 427.500"/>
          <path d="M113 522.400h13L147 512.500"/><path d="M270 524.300H256.500L227 543"/><path d="M231 642.700H217.500L186.500 658.500"/>
          <path d="M528 381L517 402"/><path d="M513 461L511 437"/>
        </g>
        <path d="M433 697H394L367 757"/>
        <g marker-start="url(#arr)" marker-end="url(#arr)">
          <path d="M480 486.400h76.400"/><path d="M480 649.300h210"/><path d="M308.400 527.600H480"/><path d="M289 576.900H480"/>
          <path d="M137 472.500h76"/><path d="M251 788.600h114.500"/><path d="M365.500 788.600H480"/><path d="M60.200 821.400H480"/>
        </g>
      </g>
      <path d="M367 757l4-15 2 3z" fill="#c01848" stroke="#c01848" stroke-width="1.300"/>

      <!-- dimension texts -->
      <g fill="#3fdcd6" font-size="16">
        <text x="514" y="338">R4</text><text x="339" y="412">R4</text><text x="623" y="727">R4</text>
        <text x="636" y="491">R92</text><text x="730" y="509">R16</text><text x="774" y="550">R12</text>
        <text x="81" y="528">R20</text><text x="271" y="530">R20</text><text x="232" y="649">R24</text>
        <text x="500" y="425">20°</text>
        <g text-anchor="middle">
          <text x="822" y="576">80</text><text x="615" y="414">12</text><text x="518" y="483">16</text><text x="585" y="647">44</text>
          <text x="792" y="691">32</text><text x="394" y="524">36</text><text x="385" y="574">40</text><text x="174" y="469">16</text>
          <text x="23" y="662">44</text><text x="128" y="691">32</text><text x="308" y="785">24</text><text x="423" y="786">24</text><text x="270" y="818">88</text>
        </g>
      </g>
      <text x="441" y="707" font-size="26" fill="#f4f052">C1</text>

      <!-- mouse pointer -->
      <path d="M374.500 744v17l4-3.500 3 6 3.500-1.500-3-6h5z" fill="#fff" stroke="#444" stroke-width=".7"/>

      <!-- crosshair -->
      <path d="M863.500 530V666M863.500 683V818M871.500 674.500H1008" stroke="#e8e8e8"/>
      <rect x="855.500" y="666.500" width="16" height="16" fill="#000" stroke="#f0f0f0"/>

      <!-- copy in progress -->
      <g fill="none" stroke="#fff" stroke-width="3.200">
        <circle cx="1341" cy="416" r="14.500"/>
        <path d="M1341 415V744M1428 415V744M1352.500 427.500L1404 445.800A14.500 14.500 0 0 1 1405.500 472.500A333.700 333.700 0 0 1 1500 691A14.500 14.500 0 0 1 1486 705.800H1340"/>
      </g>
    </g>
  </svg>

  <!-- view cube -->
  <div class="absolute top-[22px] -right-[73px] size-[120px] rounded-full border-[13px] border-[#2d2d2d]"></div>
  <div class="absolute top-[56px] right-0 w-[13px] h-[52px] bg-[#b4b4b4] overflow-hidden"><span class="absolute left-[11px] top-2 w-px h-8 bg-[#999]"></span></div>
  <span class="absolute top-[74px] right-[34px] text-lg leading-5 text-[#b0b0b0]">西</span>
  <button class="absolute top-[169px] right-0 w-[11px] h-[17px] overflow-hidden bg-[#8d8d98] rounded-l-sm text-[11px] leading-4 text-[#333] pl-[3px] text-left">WCS</button>
</main>

<!-- command window -->
<section aria-label="命令行" class="shrink-0 flex flex-col border-t-4 border-[#ececec]">
  <div class="h-[38px] bg-[#c4c4c4] overflow-hidden pt-1 text-[13px] leading-[15px] text-[#111]">
    <p class="-ml-1">的那一侧上的点<span class="font-['DejaVu_Sans_Mono'] text-[11px]">⍰</span>或<span class="font-['Liberation_Mono'] text-[11px]"> [</span>退出<span class="font-['Liberation_Mono'] text-[11px]">(E)/</span>多个<span class="font-['Liberation_Mono'] text-[11px]">(M)/</span>放弃<span class="font-['Liberation_Mono'] text-[11px]">(U)] &lt;</span>退出<span class="font-['Liberation_Mono'] text-[11px]">&gt;:</span></p>
    <p class="-ml-1">的对象<span class="font-['DejaVu_Sans_Mono'] text-[11px]">⍰</span>或<span class="font-['Liberation_Mono'] text-[11px]"> [</span>退出<span class="font-['Liberation_Mono'] text-[11px]">(E)/</span>放弃<span class="font-['Liberation_Mono'] text-[11px]">(U)] &lt;</span>退出<span class="font-['Liberation_Mono'] text-[11px]">&gt;:</span></p>
  </div>
  <input aria-label="命令" placeholder="命令" class="h-[21px] w-full bg-white -indent-1.5 italic text-xs placeholder:text-[#777] outline-none">
</section>

<!-- layout tabs and status bar -->
<footer class="h-[29px] shrink-0 flex justify-between border-t border-[#b8b8b8] bg-[#d6d6d6]">
  <div class="flex items-start text-[#6e6e6e]">
    <a href="#" class="w-3.5 h-[17px] bg-[#e6e6e6] rounded-br-lg">1</a>
    <a href="#" class="ml-1.5 w-12 h-[17px] bg-[#e6e6e6] rounded-b-lg pl-2">布局2</a>
    <button aria-label="新建布局" class="ml-2 w-5 h-4 bg-[#e6e6e6] rounded-b-lg flex items-center justify-center"><svg class="size-2" viewBox="0 0 8 8"><path d="M4 0v8M0 4h8" stroke="#666" stroke-width="1.600"/></svg></button>
  </div>
  <div class="flex items-center w-[596px] overflow-hidden pb-[3px]">
    <button class="h-6 w-[87px] shrink-0 bg-[#f1f1f1] text-[#222] font-medium">燕秀字高=2.5</button>
    <button class="ml-[3px] h-6 w-[30px] shrink-0 bg-[#f1f1f1] text-[#222] font-medium">模型</button>
    <div class="ml-0.5 h-6 w-[65px] shrink-0 bg-[#f1f1f1] flex items-center gap-2 pl-1">
      <button aria-label="栅格"><svg class="size-4 block" viewBox="0 0 16 16"><path d="M0 4h16M0 8h16M0 12h16M4 0v16M8 0v16M12 0v16" stroke="#555" stroke-width="1.100"/></svg></button>
      <button aria-label="捕捉"><svg class="size-4 block" viewBox="0 0 16 16"><path d="M1 3h14M1 8h14M1 13h14" stroke="#555" stroke-width="2" stroke-dasharray="2 4"/></svg></button>
      <svg class="w-2 h-[5px]"><use href="#caret"/></svg>
    </div>
    <div class="ml-0.5 h-6 w-[304px] shrink-0 bg-[#f1f1f1] flex items-center">
      <button aria-label="正交" class="ml-1"><svg class="size-4 block" viewBox="0 0 16 16"><path d="M1.500 0v14.500H16M1.500 10.500h4v4" fill="none" stroke="#555"/></svg></button>
      <button aria-label="极轴追踪" class="ml-[5px] w-[22px] h-6 border border-[#5b7ea6] bg-[#cfe4fa] flex items-center justify-center"><svg class="size-4" viewBox="0 0 16 16"><circle cx="7.500" cy="9" r="6" fill="none" stroke="#444" stroke-width="1.200"/><path d="M7.500 9L14 2M7.500 9H16M11 7v5" stroke="#444" fill="none"/></svg></button>
      <svg class="ml-[5px] w-2 h-[5px]"><use href="#caret"/></svg>
      <button aria-label="等轴测草图" class="ml-2"><svg class="size-4 block" viewBox="0 0 16 16"><path d="M8 0v16" stroke="#5aa05a"/><path d="M1 1l7 7" stroke="#c04040"/><path d="M8 8l6 7" stroke="#555"/></svg></button>
      <svg class="ml-2 w-2 h-[5px]"><use href="#caret"/></svg>
      <button aria-label="对象捕捉追踪" class="ml-1.5 w-[22px] h-6 border border-[#5b7ea6] bg-[#cfe4fa] flex items-center justify-center"><svg class="size-4" viewBox="0 0 16 16"><path d="M14 2L2 13.500h14" fill="none" stroke="#444" stroke-width="1.200"/><path d="M6 9q2 1 2 4" fill="none" stroke="#444"/></svg></button>
      <button aria-label="对象捕捉" class="ml-0.5 w-[22px] h-6 border border-[#5b7ea6] bg-[#cfe4fa] flex items-center justify-center"><svg class="size-4" viewBox="0 0 16 16"><path d="M6 2.500h9.500v12H2.500V6" fill="none" stroke="#444" stroke-width="1.200"/><path d="M.5.500h4v4h-4z" fill="none" stroke="#444"/></svg></button>
      <svg class="ml-1.5 w-2 h-[5px]"><use href="#caret"/></svg>
      <button aria-label="线宽" class="ml-[5px] w-[22px] h-6 border border-[#5b7ea6] bg-[#cfe4fa] flex items-center justify-center"><svg class="size-4" viewBox="0 0 16 16"><path d="M0 2h16" stroke="#333"/><path d="M0 5.500h9" stroke="#333" stroke-width="2"/><path d="M9 5.500h7M0 9h16" stroke="#555"/><path d="M0 13h10" stroke="#333" stroke-width="4"/><path d="M10 13h6" stroke="#555"/></svg></button>
      <button aria-label="注释可见性" class="ml-[5px] w-[22px] h-6 border border-[#5b7ea6] bg-[#cfe4fa] flex items-center justify-center"><svg class="size-4" viewBox="0 0 16 16"><path d="M7 0l4 9 4 7-6-3-1 3H6l-1-3-5 3 4-7z" fill="#444"/><circle cx="13" cy="4" r="2" fill="none" stroke="#444"/></svg></button>
      <button aria-label="自动缩放" class="ml-[5px]"><svg class="size-4 block" viewBox="0 0 16 16"><path d="M7 0l4 9 4 7-6-3-1 3H6l-1-3-5 3 4-7z" fill="#555"/><path d="M13 0l-3 4h5l-3 4" fill="none" stroke="#555"/></svg></button>
      <button aria-label="注释比例" class="ml-[7px]"><svg class="size-4 block" viewBox="0 0 16 16"><path d="M8 0l3 9 5 7-6-3-1 3H7l-1-3-6 3 5-7z" fill="#555"/></svg></button>
      <button class="ml-2 flex items-center gap-1 font-['Noto_Sans_CJK_SC']">1:1<svg class="w-2 h-[5px]"><use href="#caret"/></svg></button>
    </div>
    <div class="ml-0.5 h-6 w-[40px] shrink-0 bg-[#f1f1f1] flex items-center gap-2 pl-1"><button aria-label="切换工作空间"><svg class="size-4 block" viewBox="-8 -8 16 16"><circle r="4" fill="none" stroke="#555" stroke-width="3.500"/><path d="M0-8V-5M0 5v3M-8 0h3M5 0h3M-5.600-5.600l2 2M3.600 3.600l2 2M5.600-5.600l-2 2M-3.600 3.600l-2 2" stroke="#555" stroke-width="3"/></svg></button><svg class="w-2 h-[5px]"><use href="#caret"/></svg></div>
    <button aria-label="注释监视器" class="ml-0.5 h-6 w-6 shrink-0 bg-[#f1f1f1] flex items-center justify-center"><svg class="size-4" viewBox="0 0 16 16"><path d="M8 0v16M0 8h16" stroke="#555" stroke-width="2"/></svg></button>
    <button aria-label="隔离对象" class="ml-0.5 h-6 w-[26px] shrink-0 bg-[#f1f1f1] flex items-center justify-center"><svg class="size-4" viewBox="0 0 16 16"><path d="M.5.500h6v6h-6z" fill="none" stroke="#555"/><circle cx="13" cy="7" r="2.700" fill="none" stroke="#555"/><path d="M7 10.500l3.500 5h-7z" fill="none" stroke="#555"/></svg></button>
    <button aria-label="图形性能" class="ml-0.5 h-6 flex-1 bg-[#f1f1f1] flex items-center pl-[3px]"><svg class="w-4 h-4 shrink-0" viewBox="0 0 16 16"><path d="M0 0h16v8H0z" fill="#2b6ea8"/><path d="M0 8h16v8H0z" fill="#e8b84a"/></svg></button>
  </div>
</footer>

<!-- taskbar -->
<div class="h-10 shrink-0 flex items-stretch justify-between bg-linear-to-r from-[#21373f] via-[#1f303c] to-[#16223e] text-white overflow-hidden">
  <div class="flex">
    <button aria-label="Chrome" class="ml-2 w-10 border-b-2 border-[#c8ccd0] flex items-center justify-center"><svg class="size-[23px]" viewBox="-12 -12 24 24"><circle r="11.500" fill="#f7cf3a"/><path d="M0 0L-10-5.700A11.500 11.500 0 0 1 10-5.700z" fill="#d8473c"/><path d="M-10-5.700A11.500 11.500 0 0 0 0 11.500L5 3-5 3z" fill="#2fa056"/><path d="M10-5.700A11.500 11.500 0 0 1 0 11.500L5 2V-5.700z" fill="#f7cf3a"/><circle r="5.500" fill="#f4f4f4"/><circle r="4.300" fill="#4080e8"/></svg></button>
    <button aria-label="AutoCAD" class="ml-[5px] w-[48px] bg-[#4b5d66] border-b-2 border-[#d0d4d8] border-r-4 border-r-[#3c4e57] flex items-center justify-center pl-1"><svg class="size-6" viewBox="0 0 24 24"><path d="M0 0h24v24H0z" fill="#f6ecec"/><path d="M4 20L9.500 3h5L20 20h-4.500l-1-4h-5l-1.500 4zM10.500 12.500h3L12 7z" fill="#b3202c"/></svg></button>
  </div>
  <div class="flex items-center">
    <svg class="size-[18px]" viewBox="0 0 18 18"><rect x="1" y="1" width="16" height="16" rx="2" fill="#3f9a34" transform="rotate(-7 9 9)"/><path d="M13 5H7.500C5 5 5 8.500 7.500 8.500h3c2.500 0 2.500 4 0 4H5" fill="none" stroke="#fff" stroke-width="2"/></svg>
    <svg class="ml-[27px] w-3 h-3" viewBox="0 0 12 12"><path d="M1 9l5-5 5 5" fill="none" stroke="#fff" stroke-width="1.400"/></svg>
    <svg class="ml-[11px] w-3 h-[18px]" viewBox="0 0 12 18"><rect x="2.500" y="0" width="7" height="12" rx="1" fill="#fff"/><path d="M.7 9v5h10.600V9M6 14v3M3 17h6" fill="none" stroke="#fff" stroke-width="1.200"/></svg>
    <svg class="ml-[13px] w-3.5 h-4" viewBox="0 0 14 16"><g fill="none" stroke="#e4e8ee" stroke-width="1.200"><path d="M1 15A13 13 0 0 1 13 2M4 15A10 10 0 0 1 13 5.500M7 15A7 7 0 0 1 13 9"/></g><circle cx="11.500" cy="13.500" r="1.700" fill="#fff"/></svg>
    <svg class="ml-[7px] w-4 h-3.5" viewBox="0 0 16 14"><path d="M1 5h2.500L7 1.500v11L3.500 9H1z" fill="none" stroke="#fff" stroke-width="1.100"/><path d="M9 5q1.500 2 0 4M11 3q3 4 0 8M13 1q4.500 6 0 12" fill="none" stroke="#fff"/></svg>
    <div class="ml-3 w-[23px] overflow-hidden leading-[19px] font-['Open_Sans']"><div class="pl-3.5">21:14</div><div>2021/3/8</div></div>
  </div>
</div>
</body>
</html>
